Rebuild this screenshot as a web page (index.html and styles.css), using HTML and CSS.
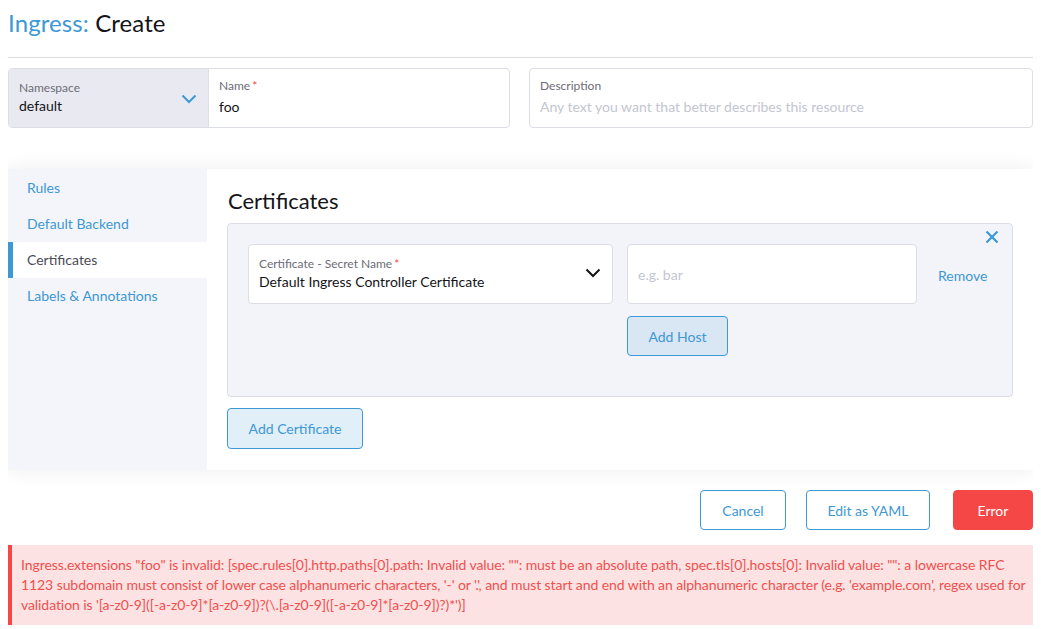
FILE: index.html
```html
<!DOCTYPE html>
<html lang="en">
<head>
<meta charset="utf-8">
<title>Ingress: Create</title>
<link rel="stylesheet" href="styles.css">
</head>
<body>
<header class="page-head">
  <h1 class="title"><span class="title-type">Ingress:</span> Create</h1>
</header>
<div class="name-row">
  <div class="ns-name">
    <div class="field ns-field">
      <div class="field-text">
        <div class="label">Namespace</div>
        <div class="value">default</div>
      </div>
      <svg class="ns-chevron" width="16" height="10" viewBox="0 0 16 10"><path d="M1.5 1.5 L8 8 L14.5 1.5" fill="none" stroke="#3d98d3" stroke-width="2"/></svg>
    </div>
    <div class="field name-field">
      <div class="label">Name<span class="req">*</span></div>
      <div class="value name-value">foo</div>
    </div>
  </div>
  <div class="field desc-field">
    <div class="label">Description</div>
    <div class="value placeholder">Any text you want that better describes this resource</div>
  </div>
</div>

<section class="tabbed">
  <nav class="tabs">
    <div class="tab">Rules</div>
    <div class="tab">Default Backend</div>
    <div class="tab active">Certificates</div>
    <div class="tab">Labels &amp; Annotations</div>
  </nav>
  <div class="tab-body">
    <h2 class="section-title">Certificates</h2>
    <div class="cert-card">
      <svg class="close-x" width="14" height="14" viewBox="0 0 14 14"><path d="M1.5 1.5 L12.5 12.5 M12.5 1.5 L1.5 12.5" stroke="#3d98d3" stroke-width="2.2" fill="none"/></svg>
      <div class="cert-grid">
        <div class="select-box">
          <div class="field-text">
            <div class="label">Certificate - Secret Name<span class="req">*</span></div>
            <div class="value">Default Ingress Controller Certificate</div>
          </div>
          <svg class="sel-chevron" width="16" height="10" viewBox="0 0 16 10"><path d="M1.5 1.5 L8 8 L14.5 1.5" fill="none" stroke="#141419" stroke-width="2"/></svg>
        </div>
        <div class="hosts">
          <div class="host-row">
            <div class="host-input"><span class="placeholder">e.g. bar</span></div>
            <button class="link-btn">Remove</button>
          </div>
          <button class="btn btn-secondary add-host">Add Host</button>
        </div>
      </div>
    </div>
    <button class="btn btn-secondary add-cert">Add Certificate</button>
  </div>
</section>

<div class="footer-actions">
  <button class="btn btn-outline">Cancel</button>
  <button class="btn btn-outline">Edit as YAML</button>
  <button class="btn btn-error">Error</button>
</div>

<div class="banner-error">Ingress.extensions "foo" is invalid: [spec.rules[0].http.paths[0].path: Invalid value: "": must be an absolute path, spec.tls[0].hosts[0]: Invalid value: "": a lowercase RFC 1123 subdomain must consist of lower case alphanumeric characters, '-' or '.', and must start and end with an alphanumeric character (e.g. 'example.com', regex used for validation is '[a-z0-9]([-a-z0-9]*[a-z0-9])?(\.[a-z0-9]([-a-z0-9]*[a-z0-9])?)*')]</div>
</body>
</html>
```

FILE: styles.css
```css
* { box-sizing: border-box; }

body {
  margin: 8px;
  font-family: Lato, "Noto Sans", sans-serif;
  color: #141419;
  background: #ffffff;
  font-size: 14px;
}

.page-head {
  border-bottom: 1px solid #dcdee7;
  padding-bottom: 19px;
  margin-bottom: 10px;
}

.title {
  margin: 0;
  font-size: 24px;
  line-height: 30px;
  font-weight: 400;
  color: #141419;
  letter-spacing: 0.1px;
}

.title-type { color: #3d98d3; }

.name-row {
  display: grid;
  grid-template-columns: 502px 1fr;
  column-gap: 19px;
}

.ns-name {
  display: flex;
  border: 1px solid #dcdee7;
  border-radius: 4px;
  height: 60px;
  overflow: hidden;
}

.field { padding: 9px 10px 0; }

.label {
  font-size: 12px;
  line-height: 16px;
  color: #6c6c76;
}

.req { color: #f64747; margin-left: 2px; }

.value {
  font-size: 14px;
  line-height: 20px;
  color: #141419;
}

.placeholder { color: #c4c5d2; }

.ns-field {
  width: 200px;
  background: #e9eaf1;
  border-right: 1px solid #dcdee7;
  display: flex;
  align-items: center;
  justify-content: space-between;
  padding: 0 10px;
}

.ns-chevron { margin-top: 2px; margin-right: 1px; }

.name-field { flex: 1; }
.name-value { margin-top: 3px; }

.desc-field {
  border: 1px solid #dcdee7;
  border-radius: 4px;
  height: 60px;
}
.desc-field .value { margin-top: 3px; }

.tabbed {
  display: flex;
  margin-top: 41px;
  height: 301px;
  box-shadow: 0 0 20px rgba(20, 20, 60, 0.08);
}

.tabs {
  width: 199px;
  background: #f4f5fa;
  padding-top: 1px;
}

.tab {
  height: 36px;
  line-height: 36px;
  padding-left: 19px;
  color: #3d98d3;
  font-size: 14px;
}

.tab.active {
  background: #ffffff;
  border-left: 5px solid #3d98d3;
  color: #4a4b55;
  padding-left: 14px;
}

.tab-body {
  flex: 1;
  background: #ffffff;
  padding: 20px;
}

.section-title {
  margin: 0 0 10px 1px;
  font-size: 22px;
  line-height: 24px;
  font-weight: 400;
  color: #141419;
}

.cert-card {
  position: relative;
  background: #f3f4f9;
  border: 1px solid #dcdee7;
  border-radius: 4px;
  padding: 20px 20px 40px 20px;
}

.close-x {
  position: absolute;
  top: 6px;
  right: 13px;
}

.cert-grid {
  display: grid;
  grid-template-columns: 365px 1fr;
  column-gap: 14px;
}

.select-box {
  height: 60px;
  background: #ffffff;
  border: 1px solid #dcdee7;
  border-radius: 4px;
  padding: 0 10px;
  display: flex;
  align-items: center;
  justify-content: space-between;
}

.sel-chevron { margin-top: -2px; margin-right: 1px; }

.host-row {
  display: flex;
  align-items: center;
}

.host-input {
  width: 290px;
  height: 60px;
  background: #ffffff;
  border: 1px solid #dcdee7;
  border-radius: 4px;
  padding: 0 10px;
  display: flex;
  align-items: center;
  font-size: 14px;
}

.link-btn {
  background: none;
  border: none;
  font-family: inherit;
  font-size: 14px;
  color: #3d98d3;
  padding: 0 0 0 21px;
  margin-top: 2px;
}

.btn {
  font-family: inherit;
  font-size: 14px;
  height: 40px;
  border-radius: 4px;
  padding: 0 21px;
  cursor: pointer;
}

.btn-secondary {
  color: #3d98d3;
  border: 1px solid #3d98d3;
  background: #e1eff8;
}

.add-host {
  margin-top: 12px;
  width: 101px;
  padding: 0;
  background: #d9e6f4;
}

.add-cert {
  margin-top: 11px;
  width: 136px;
  padding: 0;
  height: 41px;
}

.footer-actions {
  display: flex;
  justify-content: flex-end;
  gap: 20px;
  margin-top: 20px;
}

.btn-outline {
  background: #ffffff;
  border: 1px solid #3d98d3;
  color: #3d98d3;
}

.footer-actions .btn-outline:first-child { width: 86px; padding: 0; }
.footer-actions .btn-outline:nth-child(2) { width: 124px; padding: 0; }

.btn-error {
  background: #f64747;
  border: 1px solid #f64747;
  color: #ffffff;
  width: 80px;
  padding: 0;
  margin-left: 3px;
}

.banner-error {
  margin-top: 15px;
  background: #fde2e4;
  border-left: 4px solid #f64747;
  color: #f0504c;
  font-size: 14px;
  line-height: 20px;
  letter-spacing: -0.08px;
  padding: 10px 0 10px 9px;
}
```
